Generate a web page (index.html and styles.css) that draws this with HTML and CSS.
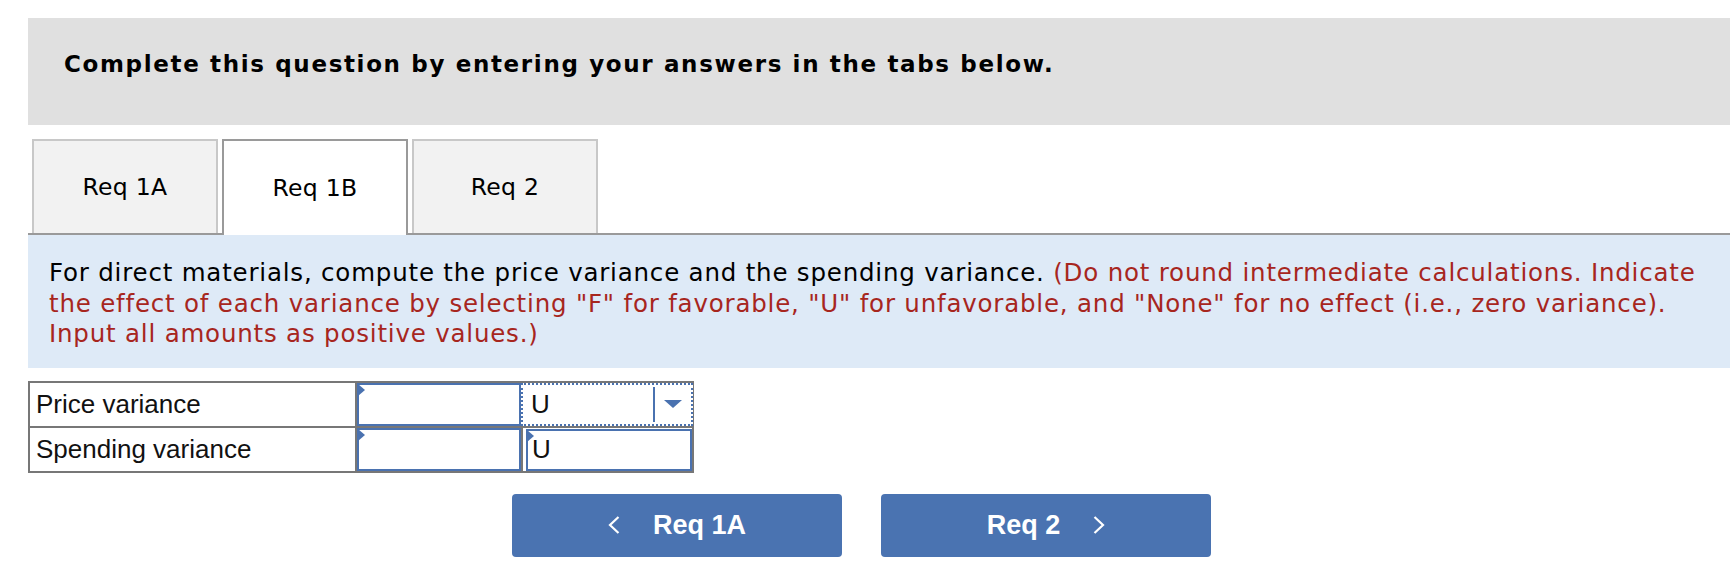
FILE: index.html
```html
<!DOCTYPE html>
<html lang="en">
<head>
<meta charset="utf-8">
<title>Question</title>
<link rel="stylesheet" href="styles.css">
</head>
<body>
<div class="page">
  <div class="banner">
    <h1 class="banner-title">Complete this question by entering your answers in the tabs below.</h1>
  </div>

  <div class="tabs">
    <div class="tab">Req 1A</div>
    <div class="tab tab-active">Req 1B</div>
    <div class="tab">Req 2</div>
  </div>

  <div class="prompt">
    <p class="prompt-text">For direct materials, compute the price variance and the spending variance. <span class="hint">(Do not round intermediate calculations. Indicate the effect of each variance by selecting "F" for favorable, "U" for unfavorable, and "None" for no effect (i.e., zero variance). Input all amounts as positive values.)</span></p>
  </div>

  <div class="answer-table">
    <div class="row">
      <div class="cell label">Price variance</div>
      <div class="cell amount"><div class="field"></div></div>
      <div class="cell effect">
        <div class="select">
          <span class="select-value">U</span>
          <span class="select-divider"></span>
          <span class="select-arrow">
            <svg width="18" height="8" viewBox="0 0 18 8"><polygon points="0,0 18,0 9,8" fill="#4a72b0"/></svg>
          </span>
        </div>
      </div>
    </div>
    <div class="row">
      <div class="cell label">Spending variance</div>
      <div class="cell amount"><div class="field"></div></div>
      <div class="cell effect"><div class="field field-text">U</div></div>
    </div>
  </div>

  <div class="nav">
    <button class="nav-btn" type="button">
      <svg class="chev" width="12" height="18" viewBox="0 0 12 18"><polyline points="10.5,1 2,9 10.5,17" fill="none" stroke="#fff" stroke-width="2.2"/></svg>
      <span>Req 1A</span>
    </button>
    <button class="nav-btn" type="button">
      <span>Req 2</span>
      <svg class="chev" width="12" height="18" viewBox="0 0 12 18"><polyline points="1.5,1 10,9 1.5,17" fill="none" stroke="#fff" stroke-width="2.2"/></svg>
    </button>
  </div>
</div>
</body>
</html>
```

FILE: styles.css
```css
body {
  margin: 0;
  background: #ffffff;
  font-family: "DejaVu Sans", Verdana, sans-serif;
  color: #000;
}

.page {
  padding: 18px 4px 0 28px;
}

.banner {
  height: 107px;
  box-sizing: border-box;
  background: #e0e0e0;
  padding: 33px 36px 0 36px;
}

.banner-title {
  margin: 0;
  font-size: 23px;
  line-height: 27px;
  font-weight: bold;
  letter-spacing: 1.65px;
}

.tabs {
  display: flex;
  align-items: flex-start;
  gap: 4px;
  margin-top: 14px;
  padding-left: 4px;
  border-bottom: 2px solid #9a9a9a;
}

.tab {
  width: 186px;
  height: 94px;
  box-sizing: border-box;
  border: 2px solid #c8c8c8;
  border-bottom: none;
  background: #f2f2f2;
  display: flex;
  align-items: center;
  justify-content: center;
  font-size: 23.5px;
  letter-spacing: 0.3px;
}

.tab-active {
  height: 96px;
  margin-bottom: -2px;
  background: #ffffff;
  border-color: #9a9a9a;
}

.prompt {
  background: #deeaf7;
  padding: 23px 14px 18px 21px;
}

.prompt-text {
  margin: 0;
  font-size: 24.5px;
  line-height: 30.5px;
  letter-spacing: 0.8px;
}

.hint {
  color: #a7261e;
}

.answer-table {
  margin-top: 13px;
  width: 666px;
  box-sizing: border-box;
  border: 2px solid #777777;
  font-family: "Liberation Sans", Arial, sans-serif;
  font-size: 26px;
  color: #111;
}

.row {
  display: flex;
  height: 43px;
}

.row + .row {
  border-top: 2px solid #777777;
}

.cell {
  box-sizing: border-box;
}

.label {
  width: 327px;
  padding-left: 6px;
  border-right: 2px solid #777777;
  display: flex;
  align-items: center;
}

.amount {
  width: 166px;
  border-right: 2px solid #777777;
}

.effect {
  flex: 1;
}

.field {
  position: relative;
  box-sizing: border-box;
  height: 100%;
  border: 2px solid #4a72b0;
}

.field::before {
  content: "";
  position: absolute;
  left: -1px;
  top: -1px;
  border-left: 7px solid #4a72b0;
  border-top: 6px solid transparent;
  border-bottom: 6px solid transparent;
}

.field-text {
  margin-left: 3px;
  margin-top: 1px;
  height: 42px;
  padding-left: 4px;
  display: flex;
  align-items: center;
}

.select {
  height: 43px;
  box-sizing: border-box;
  margin: 0 -1px 0 -2px;
  border: 2px dotted #4a72b0;
  background: #ffffff;
  display: flex;
  align-items: center;
  padding-left: 8px;
}

.select-value {
  flex: 1;
}

.select-divider {
  width: 2px;
  height: 35px;
  background: #4a72b0;
}

.select-arrow {
  width: 36px;
  display: flex;
  justify-content: center;
  align-items: center;
}

.nav {
  display: flex;
  gap: 39px;
  margin-top: 21px;
  padding-left: 484px;
}

.nav-btn {
  width: 330px;
  height: 63px;
  border: none;
  border-radius: 4px;
  background: #4a73b1;
  color: #ffffff;
  font-family: "Liberation Sans", Arial, sans-serif;
  font-weight: bold;
  font-size: 27px;
  display: flex;
  align-items: center;
  justify-content: center;
  gap: 33px;
  padding: 0;
}

.chev {
  display: block;
}
```
